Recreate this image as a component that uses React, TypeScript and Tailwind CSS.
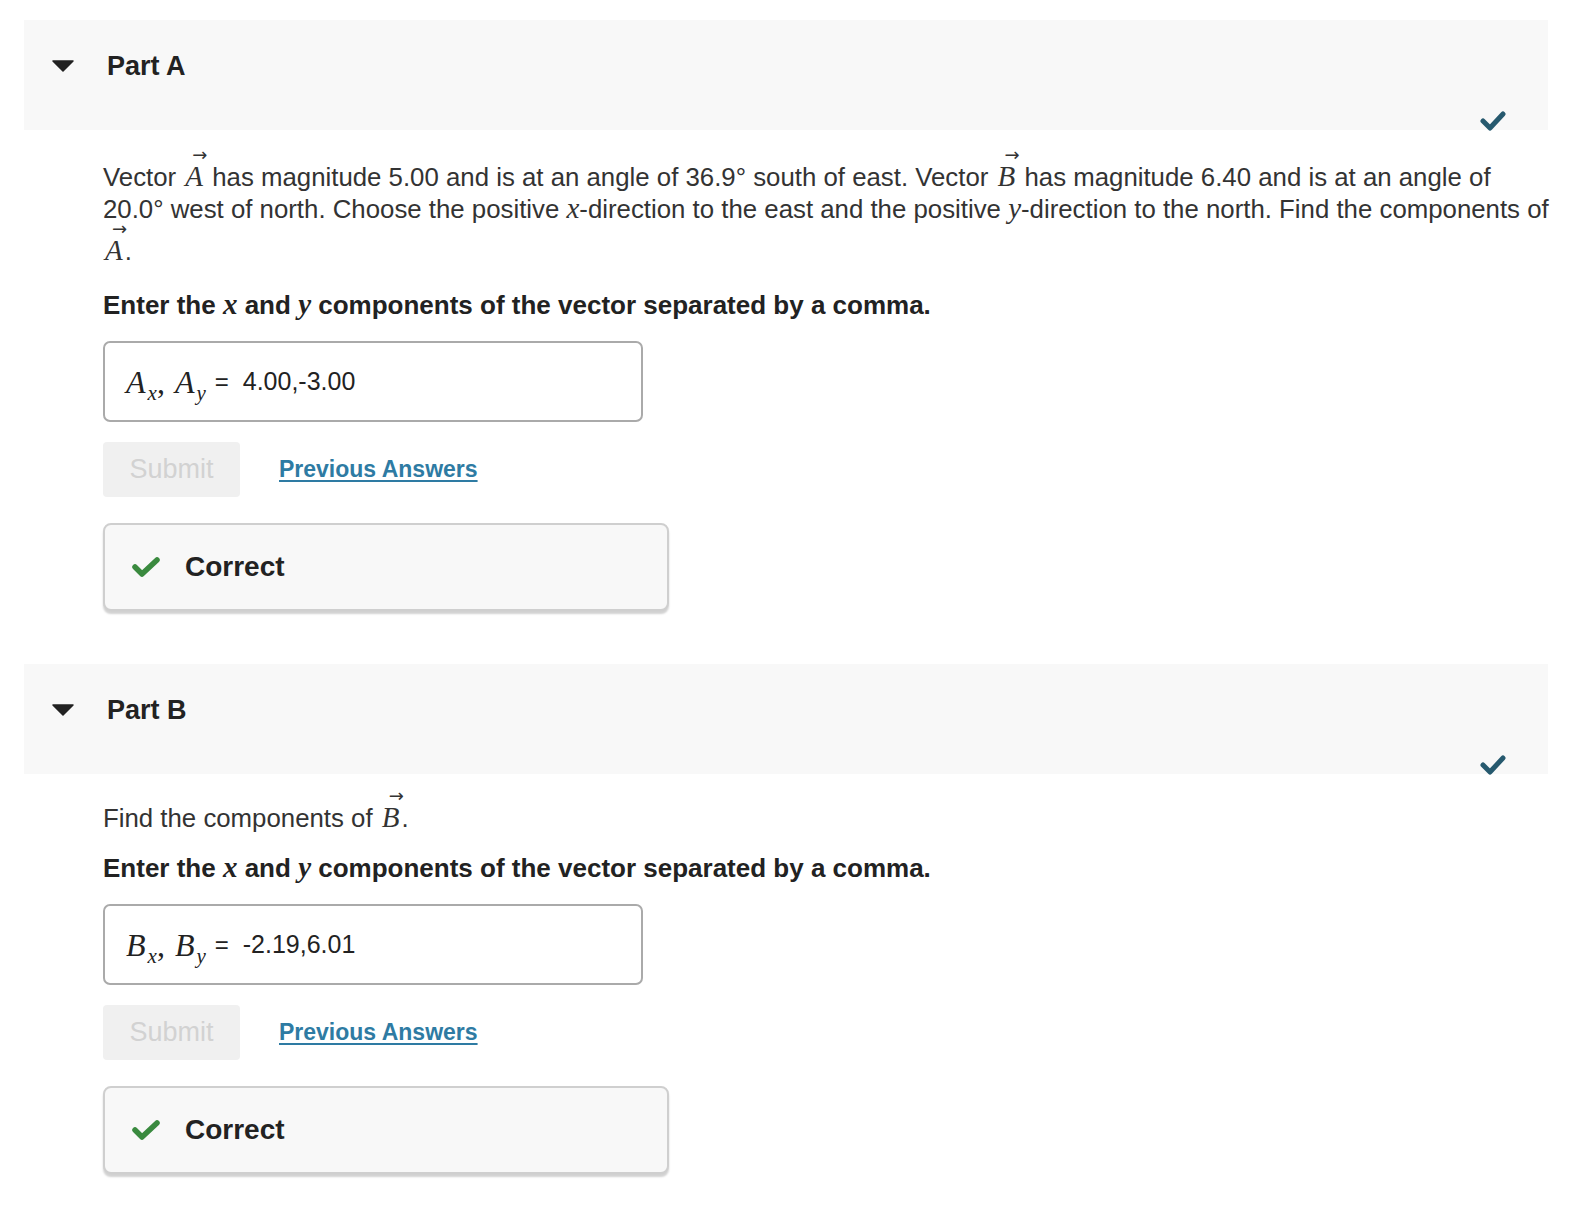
import React from "react";

const sans = { fontFamily: '"Liberation Sans", Arial, sans-serif' };

function Vec({ letter }: { letter: string }) {
  return (
    <span className="relative inline-block pt-[11px] mx-[2px] font-['Liberation_Serif',serif] italic text-[29px] leading-none">
      <span className="absolute left-[7px] top-[-5px] not-italic text-[18px] font-['DejaVu_Sans',sans-serif]">
        →
      </span>
      {letter}
    </span>
  );
}

function M({ children }: { children: React.ReactNode }) {
  return <span className="font-['Liberation_Serif',serif] italic text-[29px]">{children}</span>;
}

function HeaderCheck({ color }: { color: string }) {
  return (
    <svg width="26" height="22" viewBox="0 0 26 22">
      <path d="M3 11 L10 18 L23 4" fill="none" stroke={color} strokeWidth="5" strokeLinecap="round" strokeLinejoin="round" />
    </svg>
  );
}

function PartHeader({ title }: { title: string }) {
  return (
    <div className="relative ml-[24px] mr-[48px] h-[110px] bg-[#f8f8f8] flex items-center pb-[18px]">
      <svg className="ml-[28px]" width="22" height="12" viewBox="0 0 22 12">
        <path d="M1 1 H21 L11 11 Z" fill="#222" stroke="#222" strokeWidth="1.5" strokeLinejoin="round" />
      </svg>
      <span className="ml-[33px] text-[27px] font-bold text-[#222]">{title}</span>
      <div className="absolute right-[42px] bottom-[-2px]">
        <HeaderCheck color="#26596e" />
      </div>
    </div>
  );
}

function Sym({ s }: { s: string }) {
  return (
    <span className="font-['Liberation_Serif',serif] italic text-[32px] text-[#222]">
      {s}
      <span className="inline-block text-[21px] translate-y-[7px] ml-[2px]">x</span>
      <span className="not-italic mr-[10px]">,</span>
      {s}
      <span className="inline-block text-[21px] translate-y-[7px] ml-[2px]">y</span>
    </span>
  );
}

function AnswerBlock({ sym, value }: { sym: string; value: string }) {
  return (
    <>
      <div className="mt-[20px] w-[540px] h-[81px] border-2 border-[#aaaaaa] rounded-[7px] flex items-center pl-[21px]">
        <Sym s={sym} />
        <span className="ml-[9px] text-[24px] text-[#222]">=</span>
        <span className="ml-[14px] text-[25px] text-[#222]">{value}</span>
      </div>
      <div className="mt-[20px] flex items-center">
        <div className="w-[137px] h-[55px] bg-[#f0f0f0] rounded-[4px] flex items-center justify-center text-[27px] text-[#d2d2d2]">
          Submit
        </div>
        <a className="ml-[39px] text-[23px] font-bold text-[#2e7ba3] underline decoration-2 underline-offset-[3px]">
          Previous Answers
        </a>
      </div>
      <div className="mt-[26px] w-[566px] h-[88px] bg-[#f8f8f8] border-2 border-[#cfcfcf] rounded-[8px] shadow-[0_3px_2px_rgba(0,0,0,0.18)] flex items-center pl-[26px]">
        <svg width="30" height="24" viewBox="0 0 30 24">
          <path d="M4 12 L11 19 L26 5" fill="none" stroke="#3a8a3f" strokeWidth="5.5" strokeLinecap="round" strokeLinejoin="round" />
        </svg>
        <span className="ml-[24px] text-[28px] font-bold text-[#222]">Correct</span>
      </div>
    </>
  );
}

export default function App() {
  return (
    <div className="min-h-screen bg-white pt-[20px] pb-[36px] text-[#333]" style={sans}>
      <PartHeader title="Part A" />
      <div className="pl-[103px] pr-[24px]">
        <p className="mt-[21px] text-[25.8px] leading-[31px] whitespace-nowrap">
          Vector <Vec letter="A" /> has magnitude 5.00 and is at an angle of 36.9° south of east. Vector{" "}
          <Vec letter="B" /> has magnitude 6.40 and is at an angle of
          <br />
          20.0° west of north. Choose the positive <M>x</M>-direction to the east and the positive <M>y</M>-direction
          to the north. Find the components of
          <br />
          <Vec letter="A" />.
        </p>
        <p className="mt-[21px] text-[26px] font-bold text-[#222] leading-[32px]">
          Enter the <M>x</M> <span>and</span> <M>y</M> components of the vector separated by a comma.
        </p>
        <AnswerBlock sym="A" value="4.00,-3.00" />
      </div>

      <div className="mt-[53px]">
        <PartHeader title="Part B" />
      </div>
      <div className="pl-[103px] pr-[24px]">
        <p className="mt-[18px] text-[25.8px] leading-[31px]">
          Find the components of <Vec letter="B" />.
        </p>
        <p className="mt-[17px] text-[26px] font-bold text-[#222] leading-[32px]">
          Enter the <M>x</M> <span>and</span> <M>y</M> components of the vector separated by a comma.
        </p>
        <AnswerBlock sym="B" value="-2.19,6.01" />
      </div>
    </div>
  );
}
